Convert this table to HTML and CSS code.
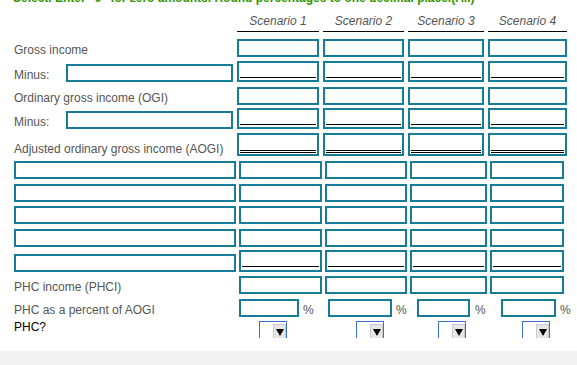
FILE: index.html
```html
<!DOCTYPE html>
<html lang="en">
<head>
<meta charset="utf-8">
<title>Personal holding company test</title>
<link rel="stylesheet" href="styles.css">
</head>
<body>
<div class="sheet">
  <p class="instructions">Select. Enter "0" for zero amounts. Round percentages to one decimal place.(All)</p>

  <div class="row cols-a head">
    <span></span>
    <span class="col-head">Scenario 1</span>
    <span class="col-head">Scenario 2</span>
    <span class="col-head">Scenario 3</span>
    <span class="col-head">Scenario 4</span>
  </div>

  <div class="row cols-a h18 mt7">
    <span class="label">Gross income</span>
    <input class="box" type="text"><input class="box" type="text"><input class="box" type="text"><input class="box" type="text">
  </div>

  <div class="row cols-a h21 mt4">
    <span class="label minus"><span>Minus:</span><input class="box side" type="text"></span>
    <input class="box under" type="text"><input class="box under" type="text"><input class="box under" type="text"><input class="box under" type="text">
  </div>

  <div class="row cols-a h18 mt5">
    <span class="label">Ordinary gross income (OGI)</span>
    <input class="box" type="text"><input class="box" type="text"><input class="box" type="text"><input class="box" type="text">
  </div>

  <div class="row cols-a h21 mt3">
    <span class="label minus"><span>Minus:</span><input class="box side" type="text"></span>
    <input class="box under" type="text"><input class="box under" type="text"><input class="box under" type="text"><input class="box under" type="text">
  </div>

  <div class="row cols-a h23 mt4">
    <span class="label">Adjusted ordinary gross income (AOGI)</span>
    <input class="box double" type="text"><input class="box double" type="text"><input class="box double" type="text"><input class="box double" type="text">
  </div>

  <div class="row cols-b h18 mt5">
    <input class="box" type="text">
    <input class="box" type="text"><input class="box" type="text"><input class="box" type="text"><input class="box" type="text">
  </div>

  <div class="row cols-b h18 mt5">
    <input class="box" type="text">
    <input class="box" type="text"><input class="box" type="text"><input class="box" type="text"><input class="box" type="text">
  </div>

  <div class="row cols-b h18 mt4">
    <input class="box" type="text">
    <input class="box" type="text"><input class="box" type="text"><input class="box" type="text"><input class="box" type="text">
  </div>

  <div class="row cols-b h18 mt5">
    <input class="box" type="text">
    <input class="box" type="text"><input class="box" type="text"><input class="box" type="text"><input class="box" type="text">
  </div>

  <div class="row cols-b h22 mt3">
    <input class="box side-low" type="text">
    <input class="box under low" type="text"><input class="box under low" type="text"><input class="box under low" type="text"><input class="box under low" type="text">
  </div>

  <div class="row cols-b h18 mt4">
    <span class="label">PHC income (PHCI)</span>
    <input class="box" type="text"><input class="box" type="text"><input class="box" type="text"><input class="box" type="text">
  </div>

  <div class="row cols-pct h18 mt5">
    <span class="label">PHC as a percent of AOGI</span>
    <span class="pct-cell"><input class="box" type="text"><span class="pct">%</span></span>
    <span class="pct-cell"><input class="box" type="text"><span class="pct">%</span></span>
    <span class="pct-cell"><input class="box" type="text"><span class="pct">%</span></span>
    <span class="pct-cell"><input class="box" type="text"><span class="pct">%</span></span>
  </div>

  <div class="row cols-pick h20 mt4">
    <span class="label strong">PHC?</span>
    <span class="dropdown"><span class="dd-btn"><svg width="8" height="7" viewBox="0 0 8 7"><path d="M0 0H8L4 7Z" fill="#000"/></svg></span></span>
    <span class="dropdown"><span class="dd-btn"><svg width="8" height="7" viewBox="0 0 8 7"><path d="M0 0H8L4 7Z" fill="#000"/></svg></span></span>
    <span class="dropdown"><span class="dd-btn"><svg width="8" height="7" viewBox="0 0 8 7"><path d="M0 0H8L4 7Z" fill="#000"/></svg></span></span>
    <span class="dropdown"><span class="dd-btn"><svg width="8" height="7" viewBox="0 0 8 7"><path d="M0 0H8L4 7Z" fill="#000"/></svg></span></span>
  </div>
</div>
<div class="footer"></div>
</body>
</html>
```

FILE: styles.css
```css
html, body {
  margin: 0;
  padding: 0;
  background: #fff;
}

body {
  font-family: "Liberation Sans", Arial, sans-serif;
  font-size: 12px;
  color: #555;
}

.sheet {
  height: 338px;
  overflow: hidden;
  padding-left: 14px;
}

.instructions {
  margin: -8px 0 0 -1px;
  line-height: 13px;
  font-weight: bold;
  color: #2f9500;
  white-space: nowrap;
}

.row {
  display: grid;
  align-items: stretch;
}

/* column sets */
.cols-a {
  grid-template-columns: 219px 82px 81px 76px 79px;
  column-gap: 4px;
}

.cols-b {
  grid-template-columns: 222px 83px 82px 77px 74px;
  column-gap: 3px;
}

.cols-pct {
  grid-template-columns: 225px 89px 89px 84px 1fr;
}

.cols-pick {
  grid-template-columns: 245px 97px 82px 84px 1fr;
}

/* row heights and spacing */
.head { margin-top: 8px; height: 19px; }
.h18 { height: 18px; }
.h20 { height: 20px; }
.h21 { height: 21px; }
.h22 { height: 22px; }
.h23 { height: 23px; }
.mt3 { margin-top: 3px; }
.mt4 { margin-top: 4px; }
.mt5 { margin-top: 5px; }
.mt7 { margin-top: 7px; }

.col-head {
  box-sizing: border-box;
  border-bottom: 1px solid #000;
  line-height: 16px;
  text-align: center;
  font-style: italic;
  color: #555;
}

.label {
  align-self: end;
  line-height: 14px;
  white-space: nowrap;
}

.label.minus {
  display: flex;
  align-items: flex-end;
  justify-content: space-between;
  height: 100%;
}

.label.minus > span {
  line-height: 14px;
}

.label.strong {
  align-self: start;
  color: #000;
  line-height: 12px;
}

/* text boxes */
.box {
  display: block;
  box-sizing: border-box;
  width: 100%;
  height: 100%;
  margin: 0;
  padding: 0;
  border: 2px solid #177c98;
  border-radius: 0;
  background: #fff;
  outline: none;
  font: inherit;
}

.box.side {
  width: 167px;
  height: 18px;
}

.box.side-low {
  align-self: end;
  height: 18px;
}

/* single total rule inside a box */
.box.under {
  background: #fff linear-gradient(#000, #000) no-repeat;
  background-size: calc(100% - 2px) 1px;
  background-position: 1px calc(100% - 2px);
}

.box.under.low {
  background-position: 1px calc(100% - 3px);
}

/* double total rule */
.box.double {
  background:
    linear-gradient(#000, #000) no-repeat 1px calc(100% - 1px) / calc(100% - 2px) 1px,
    linear-gradient(#000, #000) no-repeat 1px calc(100% - 3px) / calc(100% - 2px) 1px,
    #fff;
}

/* percentage row */
.pct-cell {
  display: flex;
  align-items: stretch;
}

.pct-cell .box { flex: none; }
.pct-cell:nth-child(2) .box { width: 60px; }
.pct-cell:nth-child(3) .box { width: 64px; }
.pct-cell:nth-child(4) .box { width: 53px; }
.pct-cell:nth-child(5) .box { width: 55px; }

.pct {
  align-self: end;
  margin-left: 4px;
  line-height: 14px;
  color: #555;
}

.pct-cell:nth-child(4) .pct { margin-left: 5px; }

/* dropdowns */
.dropdown {
  box-sizing: border-box;
  width: 28px;
  height: 20px;
  border: 1px solid #3d6fd2;
  border-bottom: none;
  padding-top: 2px;
  display: flex;
  justify-content: flex-end;
  align-items: flex-start;
}

.dd-btn {
  box-sizing: border-box;
  width: 13px;
  height: 16px;
  background: #e6e6e6;
  border: 1px solid #cacaca;
  display: flex;
  align-items: center;
  justify-content: center;
  padding-top: 1px;
}

.dd-btn svg { display: block; }

.footer {
  margin-top: 13px;
  height: 14px;
  background: #f2f2f2;
}
```
